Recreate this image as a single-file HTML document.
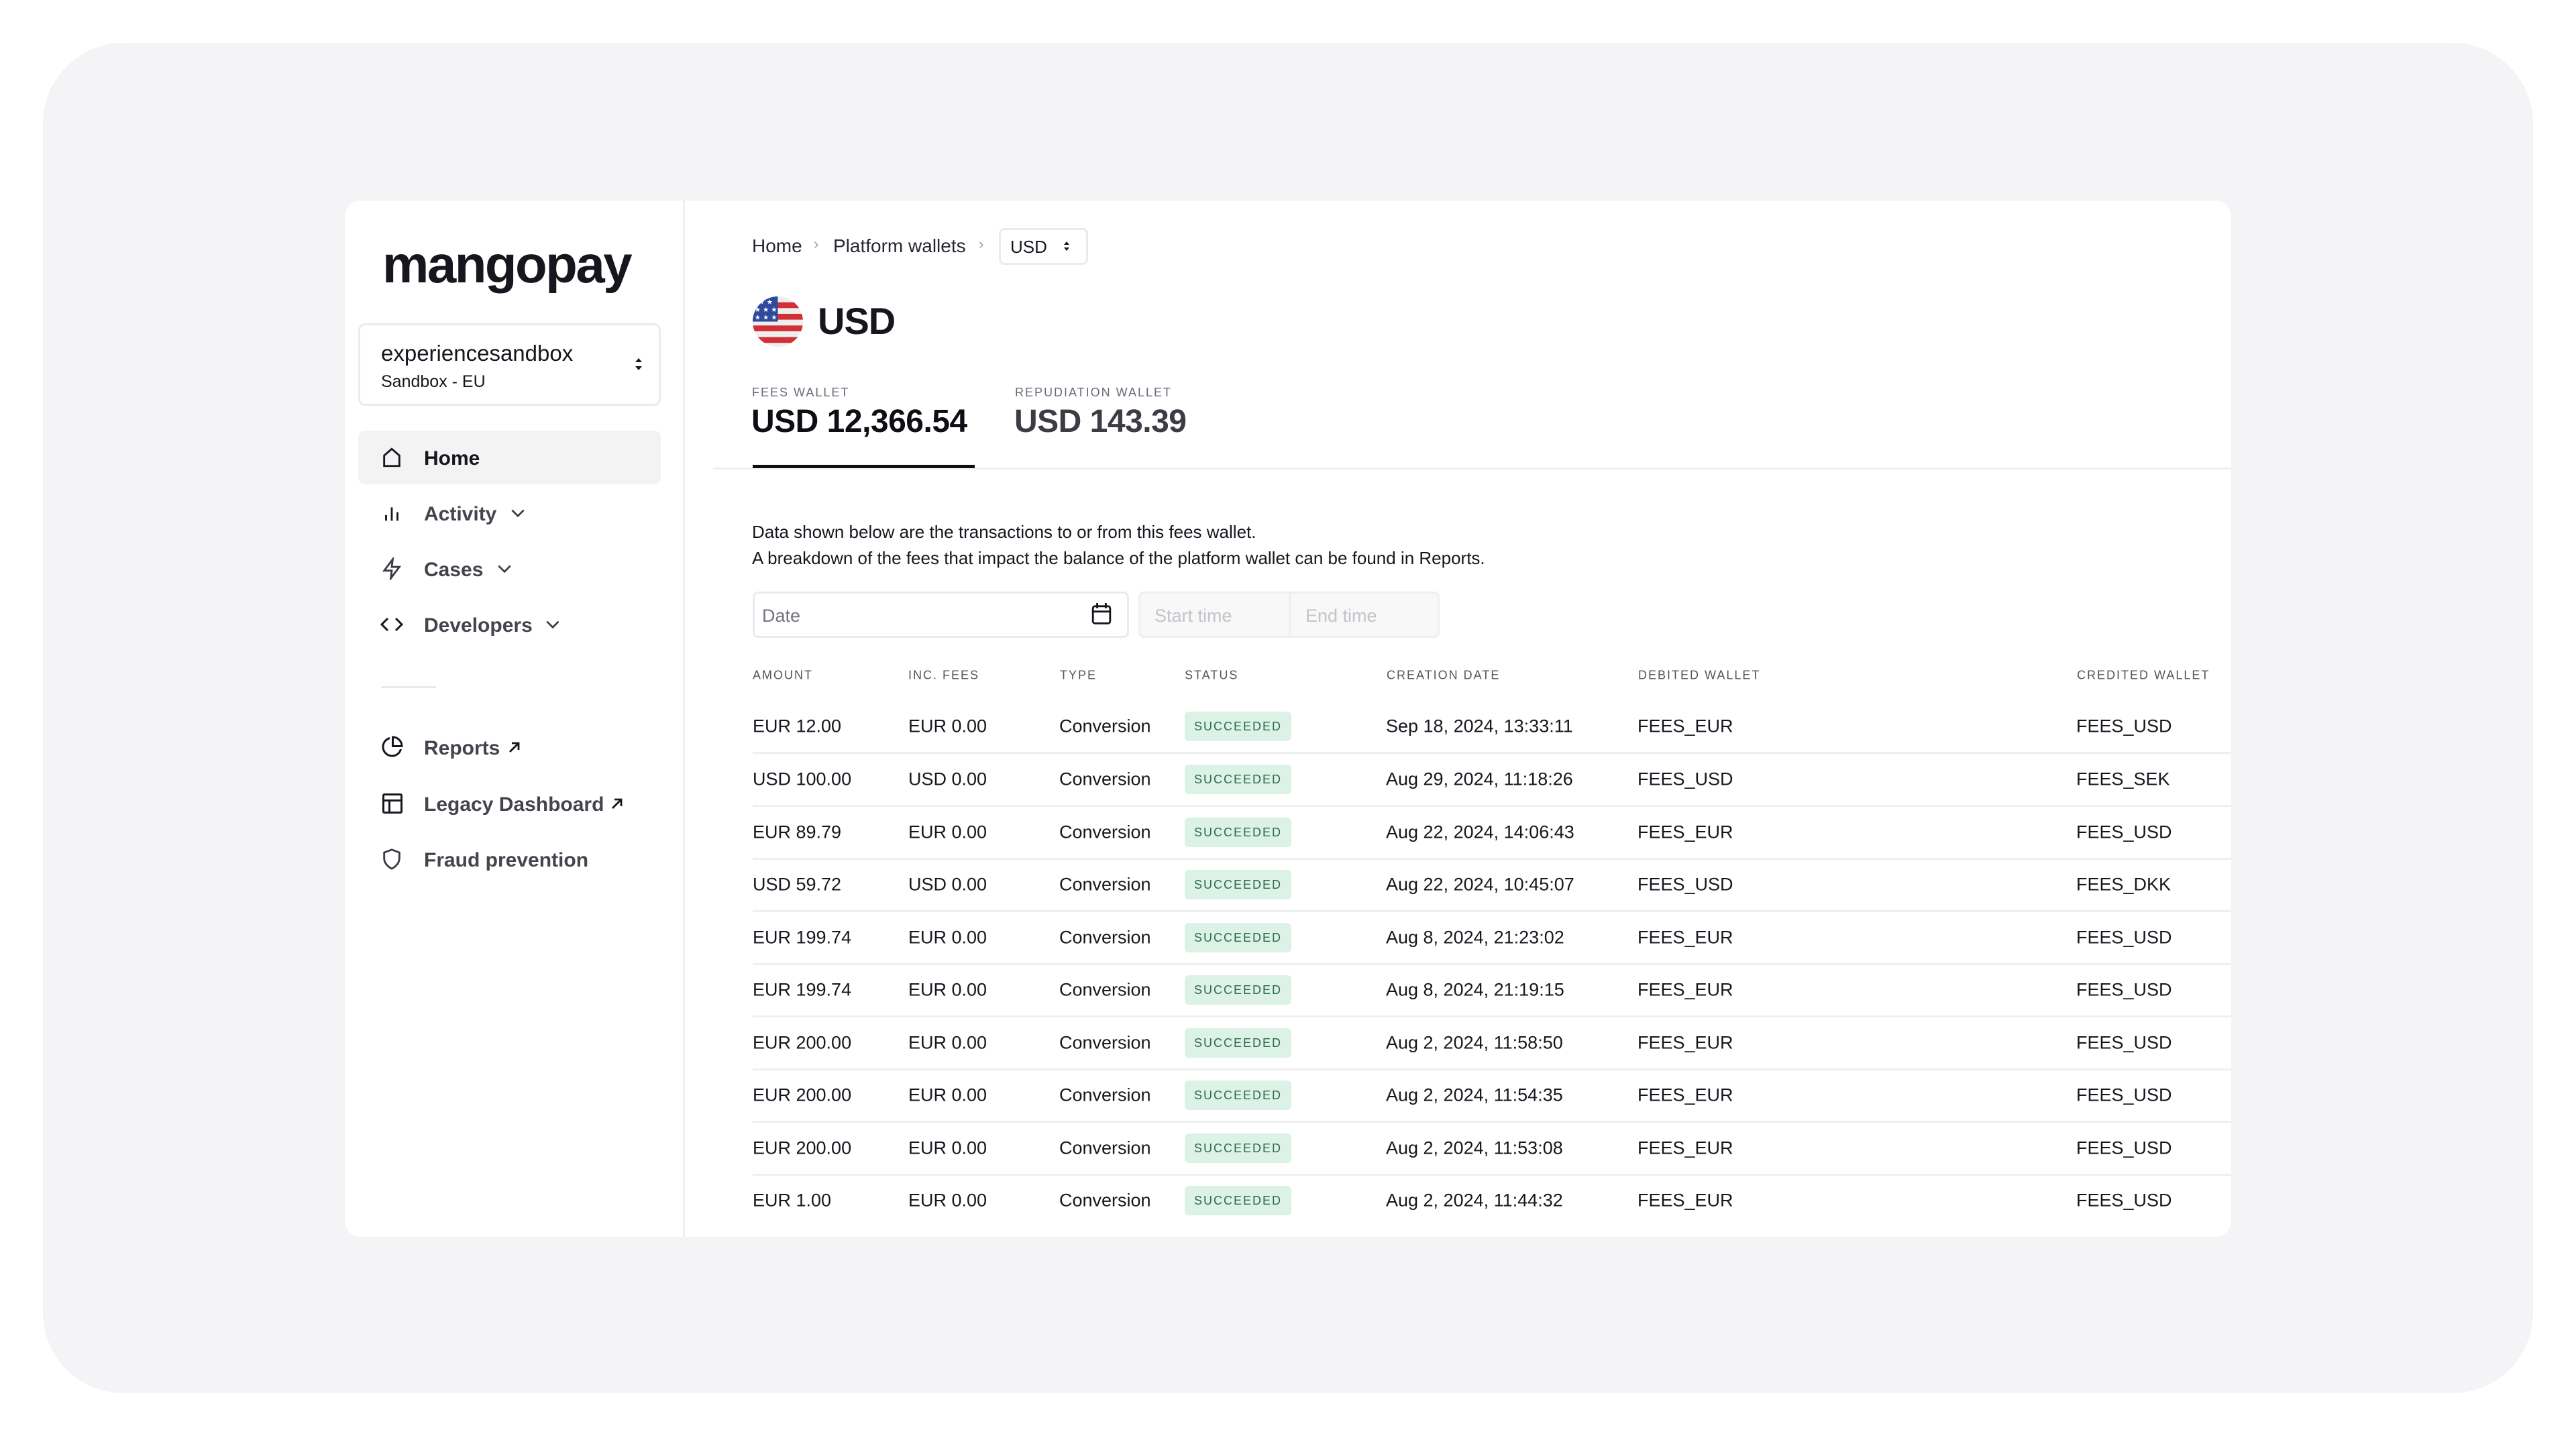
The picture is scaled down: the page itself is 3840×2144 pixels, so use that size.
<!DOCTYPE html>
<html><head><meta charset="utf-8">
<style>
*{margin:0;padding:0;box-sizing:border-box}
body{width:3840px;height:2144px;background:#fff;font-family:"Liberation Sans",Arial,sans-serif;color:#16161e;position:relative;overflow:hidden}
.a{position:absolute;white-space:nowrap}
.outer{left:64px;top:64px;width:3712px;height:2013px;background:#f4f3f5;border-radius:120px}
.card{left:514px;top:299px;width:2812px;height:1545px;background:#fff;border-radius:24px;overflow:hidden}
.nav{font-size:30px;color:#45444d;transform:translateY(-50%)}
.ico{position:absolute;transform:translate(-50%,-50%)}
.th{font-size:18px;letter-spacing:2px;color:#55535f;transform:translateY(-50%)}
.td{font-size:27px;color:#16161e;transform:translateY(-50%);margin-top:2px}
.badge{position:absolute;left:1766px;width:159px;height:44px;background:#dcf2e6;border-radius:6px;color:#2e6a4c;font-size:18px;letter-spacing:2px;text-align:center;line-height:44px;transform:translateY(-50%)}
.line{position:absolute;left:1122px;width:2204px;height:3px;background:#efeef1}
</style></head><body>
<div class="a outer"></div>
<div class="a card"></div>
<div class="a" style="left:1018px;top:299px;width:3px;height:1545px;background:#efeef1"></div>

<div class="a" style="left:570px;top:344px;font-size:78px;font-weight:bold;letter-spacing:-2.5px;color:#16161e;line-height:100px">mangopay</div>

<div class="a" style="left:534px;top:482px;width:451px;height:123px;border:3px solid #ebeaee;border-radius:10px"></div>
<div class="a" style="left:568px;top:508px;font-size:33px;color:#16161e">experiencesandbox</div>
<div class="a" style="left:568px;top:555px;font-size:25px;color:#16161e">Sandbox - EU</div>
<svg class="a" style="left:944px;top:530px" width="16" height="26" viewBox="0 0 16 26"><path d="M3 10 L8 4 L13 10Z M3 16 L8 22 L13 16Z" fill="#16161e"/></svg>

<div class="a" style="left:534px;top:642px;width:451px;height:80px;background:#f3f3f4;border-radius:10px"></div>
<svg class="ico" style="left:584px;top:682px" width="34" height="34" viewBox="0 0 24 24" fill="none" stroke="#16161e" stroke-width="2"><path d="M4 10 L12 3 L20 10 V21 H4Z"/></svg>
<div class="a nav" style="left:632px;top:684px;color:#16161e;font-weight:bold">Home</div>

<svg class="ico" style="left:584px;top:765px" width="34" height="34" viewBox="0 0 24 24" fill="none" stroke="#16161e" stroke-width="2"><path d="M6 20V14 M12 20V6 M18 20V11"/></svg>
<div class="a nav" style="left:632px;top:767px;font-weight:bold">Activity</div>
<svg class="ico" style="left:772px;top:765px" width="26" height="26" viewBox="0 0 24 24" fill="none" stroke="#3a3a44" stroke-width="2.5"><path d="M4 8 L12 16 L20 8"/></svg>

<svg class="ico" style="left:584px;top:848px" width="34" height="34" viewBox="0 0 24 24" fill="none" stroke="#3a3a44" stroke-width="2"><path d="M13 2 L4 14 H12 L11 22 L20 10 H12Z"/></svg>
<div class="a nav" style="left:632px;top:850px;font-weight:bold">Cases</div>
<svg class="ico" style="left:752px;top:848px" width="26" height="26" viewBox="0 0 24 24" fill="none" stroke="#3a3a44" stroke-width="2.5"><path d="M4 8 L12 16 L20 8"/></svg>

<svg class="ico" style="left:584px;top:931px" width="36" height="36" viewBox="0 0 24 24" fill="none" stroke="#16161e" stroke-width="2"><path d="M8 6 L2 12 L8 18 M16 6 L22 12 L16 18"/></svg>
<div class="a nav" style="left:632px;top:933px;font-weight:bold">Developers</div>
<svg class="ico" style="left:824px;top:931px" width="26" height="26" viewBox="0 0 24 24" fill="none" stroke="#3a3a44" stroke-width="2.5"><path d="M4 8 L12 16 L20 8"/></svg>

<div class="a" style="left:568px;top:1023px;width:82px;height:3px;background:#ebeaee"></div>

<svg class="ico" style="left:584px;top:1114px" width="36" height="36" viewBox="0 0 24 24" fill="none" stroke="#16161e" stroke-width="2"><path d="M21 14 A9 9 0 1 1 10 3"/><path d="M13 2 A9 9 0 0 1 22 11 H13Z"/></svg>
<div class="a nav" style="left:632px;top:1116px;font-weight:bold">Reports</div>
<svg class="ico" style="left:767px;top:1114px" width="24" height="24" viewBox="0 0 24 24" fill="none" stroke="#16161e" stroke-width="2.8"><path d="M5 19 L18 6 M8 6 H18 V16"/></svg>

<svg class="ico" style="left:585px;top:1198px" width="36" height="36" viewBox="0 0 24 24" fill="none" stroke="#16161e" stroke-width="2"><rect x="3" y="3" width="18" height="18" rx="1"/><path d="M3 9 H21 M9 9 V21"/></svg>
<div class="a nav" style="left:632px;top:1200px;font-weight:bold">Legacy Dashboard</div>
<svg class="ico" style="left:920px;top:1198px" width="24" height="24" viewBox="0 0 24 24" fill="none" stroke="#16161e" stroke-width="2.8"><path d="M5 19 L18 6 M8 6 H18 V16"/></svg>

<svg class="ico" style="left:584px;top:1281px" width="34" height="34" viewBox="0 0 24 24" fill="none" stroke="#3a3a44" stroke-width="2"><path d="M12 2 L20 5 V11 C20 16 16 20 12 22 C8 20 4 16 4 11 V5Z"/></svg>
<div class="a nav" style="left:632px;top:1283px;font-weight:bold">Fraud prevention</div>

<div class="a" style="left:1121px;top:351px;font-size:28px;color:#26262e">Home</div>
<div class="a" style="left:1213px;top:351px;font-size:22px;color:#9a99a2">›</div>
<div class="a" style="left:1242px;top:351px;font-size:28px;color:#26262e">Platform wallets</div>
<div class="a" style="left:1459px;top:351px;font-size:22px;color:#9a99a2">›</div>
<div class="a" style="left:1489px;top:340px;width:133px;height:55px;border:3px solid #ebeaee;border-radius:8px"></div>
<div class="a" style="left:1506px;top:353px;font-size:26px;color:#16161e">USD</div>
<svg class="a" style="left:1584px;top:356px" width="12" height="22" viewBox="0 0 12 22"><path d="M2 9 L6 4 L10 9Z M2 13 L6 18 L10 13Z" fill="#16161e"/></svg>

<svg class="a" style="left:1122px;top:442px" width="75" height="75" viewBox="0 0 26 26">
<defs><clipPath id="c"><circle cx="13" cy="13" r="13"/></clipPath></defs>
<g clip-path="url(#c)">
<rect width="26" height="26" fill="#eeeeee"/>
<rect y="3" width="26" height="3" fill="#d22f37"/>
<rect y="9" width="26" height="3" fill="#d22f37"/>
<rect y="15" width="26" height="3" fill="#d22f37"/>
<rect y="21" width="26" height="3" fill="#d22f37"/>
<rect width="13" height="13" fill="#2f4a9c"/>
<g fill="#fff" font-size="3.5" font-family="DejaVu Sans"><text x="3" y="4">★ ★</text><text x="1" y="8">★ ★ ★</text><text x="1" y="12">★ ★ ★</text></g>
</g></svg>
<div class="a" style="left:1219px;top:446px;font-size:56px;font-weight:bold;color:#16161e;letter-spacing:-1px">USD</div>

<div class="a" style="left:1121px;top:575px;font-size:18px;letter-spacing:2px;color:#6d6878">FEES WALLET</div>
<div class="a" style="left:1120px;top:601px;font-size:48px;font-weight:bold;color:#0e0e14;letter-spacing:-0.5px">USD 12,366.54</div>
<div class="a" style="left:1513px;top:575px;font-size:18px;letter-spacing:2px;color:#6d6878">REPUDIATION WALLET</div>
<div class="a" style="left:1512px;top:601px;font-size:48px;font-weight:bold;color:#3c3c44;letter-spacing:-0.5px">USD 143.39</div>
<div class="a" style="left:1063px;top:697px;width:2263px;height:3px;background:#efeef1"></div>
<div class="a" style="left:1122px;top:693px;width:331px;height:5px;background:#0e0e14"></div>

<div class="a" style="left:1121px;top:778px;font-size:26px;color:#16161e">Data shown below are the transactions to or from this fees wallet.</div>
<div class="a" style="left:1121px;top:817px;font-size:26px;color:#16161e">A breakdown of the fees that impact the balance of the platform wallet can be found in Reports.</div>

<div class="a" style="left:1122px;top:882px;width:561px;height:69px;border:3px solid #ebeaee;border-radius:8px"></div>
<div class="a" style="left:1136px;top:903px;font-size:27px;color:#75737e">Date</div>
<svg class="a" style="left:1626px;top:897px" width="32" height="36" viewBox="0 0 20 22" fill="none" stroke="#16161e" stroke-width="1.8"><rect x="2" y="4" width="16" height="16" rx="2"/><path d="M2 9 H18 M6 1 V6 M14 1 V6"/></svg>
<div class="a" style="left:1697px;top:882px;width:449px;height:69px;border:3px solid #efeef1;border-radius:8px;background:#f8f8f9"></div>
<div class="a" style="left:1921px;top:884px;width:3px;height:65px;background:#efeef1"></div>
<div class="a" style="left:1721px;top:903px;font-size:27px;color:#c4c3ca">Start time</div>
<div class="a" style="left:1946px;top:903px;font-size:27px;color:#c4c3ca">End time</div>

<div class="a th" style="left:1122px;top:1007px">AMOUNT</div>
<div class="a th" style="left:1354px;top:1007px">INC. FEES</div>
<div class="a th" style="left:1580px;top:1007px">TYPE</div>
<div class="a th" style="left:1766px;top:1007px">STATUS</div>
<div class="a th" style="left:2067px;top:1007px">CREATION DATE</div>
<div class="a th" style="left:2442px;top:1007px">DEBITED WALLET</div>
<div class="a th" style="left:3096px;top:1007px">CREDITED WALLET</div>

<div class="a td" style="left:1122px;top:1081px">EUR 12.00</div><div class="a td" style="left:1354px;top:1081px">EUR 0.00</div><div class="a td" style="left:1579px;top:1081px">Conversion</div><div class="badge" style="top:1083px">SUCCEEDED</div><div class="a td" style="left:2066px;top:1081px">Sep 18, 2024, 13:33:11</div><div class="a td" style="left:2441px;top:1081px">FEES_EUR</div><div class="a td" style="left:3095px;top:1081px">FEES_USD</div>
<div class="line" style="top:1121px"></div>
<div class="a td" style="left:1122px;top:1160px">USD 100.00</div><div class="a td" style="left:1354px;top:1160px">USD 0.00</div><div class="a td" style="left:1579px;top:1160px">Conversion</div><div class="badge" style="top:1162px">SUCCEEDED</div><div class="a td" style="left:2066px;top:1160px">Aug 29, 2024, 11:18:26</div><div class="a td" style="left:2441px;top:1160px">FEES_USD</div><div class="a td" style="left:3095px;top:1160px">FEES_SEK</div>
<div class="line" style="top:1200px"></div>
<div class="a td" style="left:1122px;top:1239px">EUR 89.79</div><div class="a td" style="left:1354px;top:1239px">EUR 0.00</div><div class="a td" style="left:1579px;top:1239px">Conversion</div><div class="badge" style="top:1241px">SUCCEEDED</div><div class="a td" style="left:2066px;top:1239px">Aug 22, 2024, 14:06:43</div><div class="a td" style="left:2441px;top:1239px">FEES_EUR</div><div class="a td" style="left:3095px;top:1239px">FEES_USD</div>
<div class="line" style="top:1279px"></div>
<div class="a td" style="left:1122px;top:1317px">USD 59.72</div><div class="a td" style="left:1354px;top:1317px">USD 0.00</div><div class="a td" style="left:1579px;top:1317px">Conversion</div><div class="badge" style="top:1319px">SUCCEEDED</div><div class="a td" style="left:2066px;top:1317px">Aug 22, 2024, 10:45:07</div><div class="a td" style="left:2441px;top:1317px">FEES_USD</div><div class="a td" style="left:3095px;top:1317px">FEES_DKK</div>
<div class="line" style="top:1357px"></div>
<div class="a td" style="left:1122px;top:1396px">EUR 199.74</div><div class="a td" style="left:1354px;top:1396px">EUR 0.00</div><div class="a td" style="left:1579px;top:1396px">Conversion</div><div class="badge" style="top:1398px">SUCCEEDED</div><div class="a td" style="left:2066px;top:1396px">Aug 8, 2024, 21:23:02</div><div class="a td" style="left:2441px;top:1396px">FEES_EUR</div><div class="a td" style="left:3095px;top:1396px">FEES_USD</div>
<div class="line" style="top:1436px"></div>
<div class="a td" style="left:1122px;top:1474px">EUR 199.74</div><div class="a td" style="left:1354px;top:1474px">EUR 0.00</div><div class="a td" style="left:1579px;top:1474px">Conversion</div><div class="badge" style="top:1476px">SUCCEEDED</div><div class="a td" style="left:2066px;top:1474px">Aug 8, 2024, 21:19:15</div><div class="a td" style="left:2441px;top:1474px">FEES_EUR</div><div class="a td" style="left:3095px;top:1474px">FEES_USD</div>
<div class="line" style="top:1514px"></div>
<div class="a td" style="left:1122px;top:1553px">EUR 200.00</div><div class="a td" style="left:1354px;top:1553px">EUR 0.00</div><div class="a td" style="left:1579px;top:1553px">Conversion</div><div class="badge" style="top:1555px">SUCCEEDED</div><div class="a td" style="left:2066px;top:1553px">Aug 2, 2024, 11:58:50</div><div class="a td" style="left:2441px;top:1553px">FEES_EUR</div><div class="a td" style="left:3095px;top:1553px">FEES_USD</div>
<div class="line" style="top:1593px"></div>
<div class="a td" style="left:1122px;top:1631px">EUR 200.00</div><div class="a td" style="left:1354px;top:1631px">EUR 0.00</div><div class="a td" style="left:1579px;top:1631px">Conversion</div><div class="badge" style="top:1633px">SUCCEEDED</div><div class="a td" style="left:2066px;top:1631px">Aug 2, 2024, 11:54:35</div><div class="a td" style="left:2441px;top:1631px">FEES_EUR</div><div class="a td" style="left:3095px;top:1631px">FEES_USD</div>
<div class="line" style="top:1671px"></div>
<div class="a td" style="left:1122px;top:1710px">EUR 200.00</div><div class="a td" style="left:1354px;top:1710px">EUR 0.00</div><div class="a td" style="left:1579px;top:1710px">Conversion</div><div class="badge" style="top:1712px">SUCCEEDED</div><div class="a td" style="left:2066px;top:1710px">Aug 2, 2024, 11:53:08</div><div class="a td" style="left:2441px;top:1710px">FEES_EUR</div><div class="a td" style="left:3095px;top:1710px">FEES_USD</div>
<div class="line" style="top:1750px"></div>
<div class="a td" style="left:1122px;top:1788px">EUR 1.00</div><div class="a td" style="left:1354px;top:1788px">EUR 0.00</div><div class="a td" style="left:1579px;top:1788px">Conversion</div><div class="badge" style="top:1790px">SUCCEEDED</div><div class="a td" style="left:2066px;top:1788px">Aug 2, 2024, 11:44:32</div><div class="a td" style="left:2441px;top:1788px">FEES_EUR</div><div class="a td" style="left:3095px;top:1788px">FEES_USD</div>
</body></html>
